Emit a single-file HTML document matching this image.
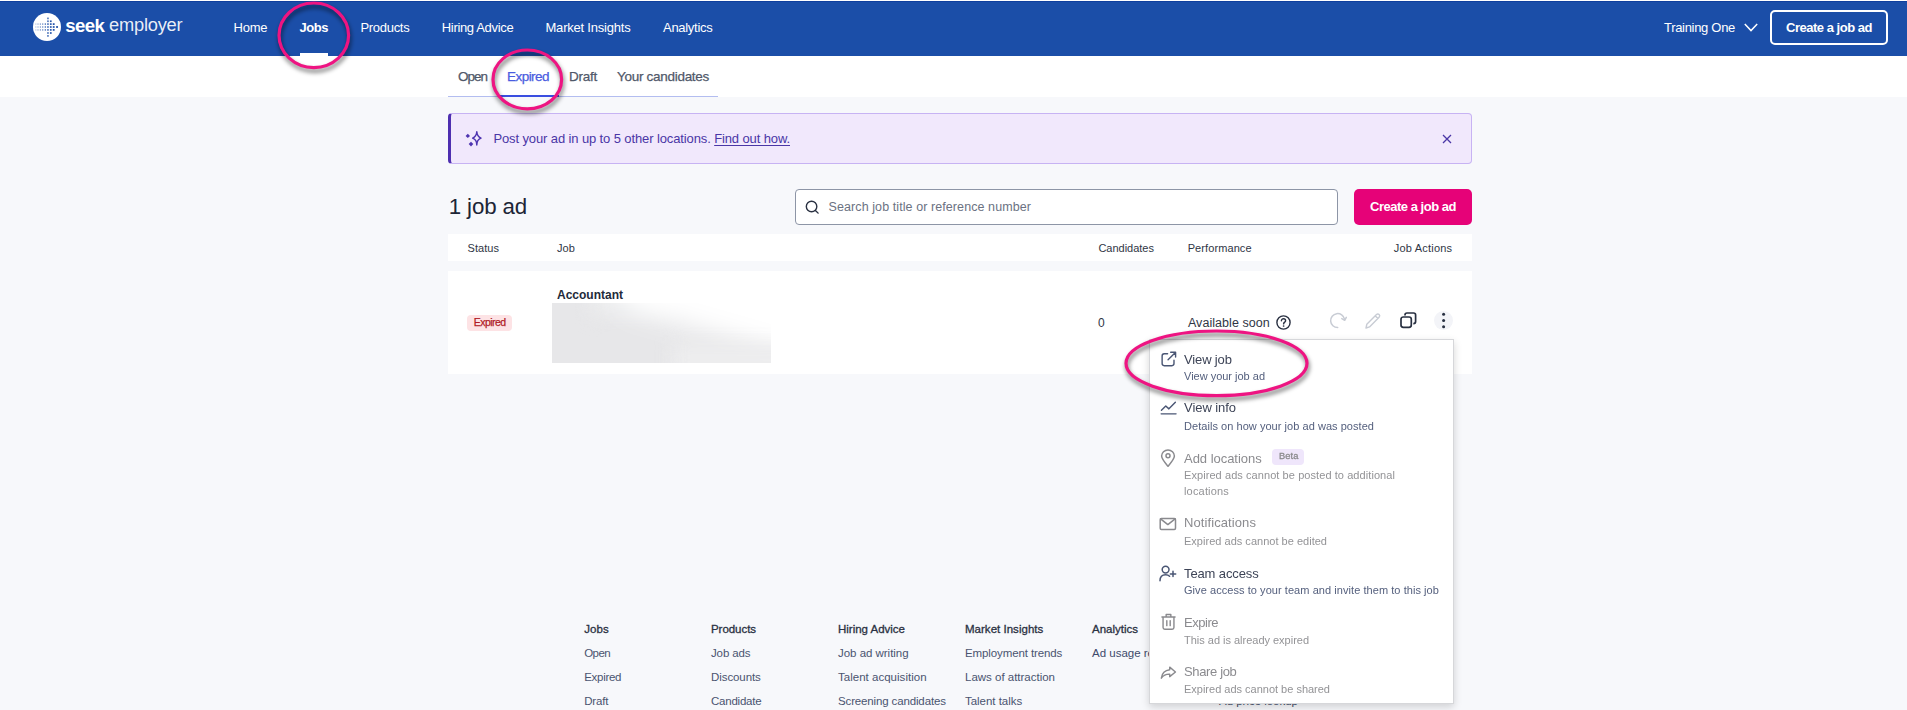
<!DOCTYPE html><html><head><meta charset="utf-8"><style>
*{margin:0;padding:0;box-sizing:border-box}
html,body{width:1907px;height:710px;overflow:hidden;background:#f7f8fb;font-family:"Liberation Sans",sans-serif;}
.a{position:absolute;white-space:nowrap}
svg.a{overflow:visible}
</style></head><body>
<div class="a" style="left:0;top:0;width:1907px;height:1px;background:#ffffff"></div><div class="a" style="left:0;top:1px;width:1907px;height:55px;background:#1b4ea8"></div><div class="a" style="left:0;top:1px;width:1907px;height:1px;background:#0f3f9e"></div><div class="a" style="left:0;top:56px;width:1907px;height:41px;background:#ffffff"></div><svg class="a" style="left:33px;top:13px" width="28" height="28" viewBox="0 0 28 28"><circle cx="14" cy="14" r="14" fill="#fff"/><rect x="2.10" y="10.25" width="1.4" height="1.7" fill="#1b4ea8" opacity="0.2"/><rect x="2.10" y="13.15" width="1.4" height="1.7" fill="#1b4ea8" opacity="0.2"/><rect x="2.10" y="16.05" width="1.4" height="1.7" fill="#1b4ea8" opacity="0.2"/><rect x="4.30" y="10.25" width="1.4" height="1.7" fill="#1b4ea8" opacity="0.3"/><rect x="4.30" y="13.15" width="1.4" height="1.7" fill="#1b4ea8" opacity="0.3"/><rect x="4.30" y="16.05" width="1.4" height="1.7" fill="#1b4ea8" opacity="0.3"/><rect x="6.80" y="10.25" width="1.2" height="1.7" fill="#1b4ea8" opacity="0.45"/><rect x="6.80" y="13.15" width="1.2" height="1.7" fill="#1b4ea8" opacity="0.45"/><rect x="6.80" y="16.05" width="1.2" height="1.7" fill="#1b4ea8" opacity="0.45"/><rect x="9.10" y="10.25" width="1.2" height="1.7" fill="#1b4ea8" opacity="0.55"/><rect x="9.10" y="13.15" width="1.2" height="1.7" fill="#1b4ea8" opacity="0.55"/><rect x="9.10" y="16.05" width="1.2" height="1.7" fill="#1b4ea8" opacity="0.55"/><rect x="11.75" y="10.25" width="1.1" height="1.7" fill="#1b4ea8" opacity="0.8"/><rect x="11.75" y="13.15" width="1.1" height="1.7" fill="#1b4ea8" opacity="0.8"/><rect x="11.75" y="16.05" width="1.1" height="1.7" fill="#1b4ea8" opacity="0.8"/><rect x="14.11" y="4.55" width="1.7" height="1.7" fill="#1b4ea8" opacity="0.75"/><rect x="14.11" y="7.40" width="1.7" height="1.7" fill="#1b4ea8" opacity="0.75"/><rect x="14.11" y="10.25" width="1.7" height="1.7" fill="#1b4ea8" opacity="0.75"/><rect x="14.11" y="13.15" width="1.7" height="1.7" fill="#1b4ea8" opacity="0.75"/><rect x="14.11" y="16.05" width="1.7" height="1.7" fill="#1b4ea8" opacity="0.75"/><rect x="14.11" y="19.15" width="1.7" height="1.7" fill="#1b4ea8" opacity="0.75"/><rect x="14.11" y="22.05" width="1.7" height="1.7" fill="#1b4ea8" opacity="0.75"/><rect x="16.95" y="7.40" width="1.7" height="1.7" fill="#1b4ea8" opacity="0.95"/><rect x="16.95" y="10.25" width="1.7" height="1.7" fill="#1b4ea8" opacity="0.95"/><rect x="16.95" y="13.15" width="1.7" height="1.7" fill="#1b4ea8" opacity="0.95"/><rect x="16.95" y="16.05" width="1.7" height="1.7" fill="#1b4ea8" opacity="0.95"/><rect x="16.95" y="19.15" width="1.7" height="1.7" fill="#1b4ea8" opacity="0.95"/><rect x="19.80" y="10.25" width="1.8" height="1.7" fill="#1b4ea8" opacity="1"/><rect x="19.80" y="13.15" width="1.8" height="1.7" fill="#1b4ea8" opacity="1"/><rect x="19.80" y="16.05" width="1.8" height="1.7" fill="#1b4ea8" opacity="1"/><rect x="23.11" y="13.15" width="1.9" height="1.7" fill="#1b4ea8" opacity="1"/></svg><div class="a t" id="t0" style="left:65.3px;top:16.96px;font-size:18.6px;line-height:18.6px;color:#fff;font-weight:700;letter-spacing:-0.594px;">seek</div>
<div class="a t" id="t1" style="left:109px;top:15.51px;font-size:18.3px;line-height:18.3px;color:rgba(255,255,255,0.92);font-weight:400;letter-spacing:-0.223px;">employer</div>
<div class="a t" id="t2" style="left:233.6px;top:21.20px;font-size:13px;line-height:13px;color:#fff;font-weight:400;letter-spacing:-0.247px;">Home</div>
<div class="a t" id="t3" style="left:299.5px;top:21.20px;font-size:13px;line-height:13px;color:#fff;font-weight:700;letter-spacing:-0.461px;">Jobs</div>
<div class="a t" id="t4" style="left:360.4px;top:21.20px;font-size:13px;line-height:13px;color:#fff;font-weight:400;letter-spacing:-0.289px;">Products</div>
<div class="a t" id="t5" style="left:441.8px;top:21.20px;font-size:13px;line-height:13px;color:#fff;font-weight:400;letter-spacing:-0.337px;">Hiring Advice</div>
<div class="a t" id="t6" style="left:545.5px;top:21.20px;font-size:13px;line-height:13px;color:#fff;font-weight:400;letter-spacing:-0.210px;">Market Insights</div>
<div class="a t" id="t7" style="left:663px;top:21.20px;font-size:13px;line-height:13px;color:#fff;font-weight:400;letter-spacing:-0.292px;">Analytics</div>
<div class="a" style="left:300px;top:53px;width:28px;height:3px;background:#fff"></div><div class="a t" id="t8" style="left:1664px;top:21.20px;font-size:13px;line-height:13px;color:#fff;font-weight:400;letter-spacing:-0.306px;">Training One</div>
<svg class="a" style="left:1744px;top:23px" width="14" height="9" viewBox="0 0 14 9"><path d="M0.8 1 L7 7.6 L13.2 1" fill="none" stroke="#fff" stroke-width="1.5"/></svg><div class="a" style="left:1770px;top:10px;width:118px;height:35px;border:2px solid #fff;border-radius:5px"></div><div class="a t" id="t9" style="left:1786px;top:21.20px;font-size:13px;line-height:13px;color:#fff;font-weight:700;letter-spacing:-0.480px;">Create a job ad</div>
<div class="a t" id="t10" style="left:458px;top:69.87px;font-size:13.5px;line-height:13.5px;color:#505869;font-weight:400;letter-spacing:-1.008px;-webkit-text-stroke:0.25px #505869;">Open</div>
<div class="a t" id="t11" style="left:507px;top:69.87px;font-size:13.5px;line-height:13.5px;color:#4a5ce0;font-weight:400;letter-spacing:-0.540px;-webkit-text-stroke:0.25px #4a5ce0;">Expired</div>
<div class="a t" id="t12" style="left:569px;top:69.87px;font-size:13.5px;line-height:13.5px;color:#505869;font-weight:400;letter-spacing:-0.253px;-webkit-text-stroke:0.25px #505869;">Draft</div>
<div class="a t" id="t13" style="left:617px;top:69.87px;font-size:13.5px;line-height:13.5px;color:#505869;font-weight:400;letter-spacing:-0.289px;-webkit-text-stroke:0.25px #505869;">Your candidates</div>
<div class="a" style="left:448px;top:96px;width:270px;height:1px;background:#b3bdf0"></div><div class="a" style="left:499px;top:95px;width:60px;height:2px;background:#3a4ee0"></div><div class="a" style="left:448px;top:113px;width:1024px;height:51px;background:#f1e8fc;border:1px solid #c7b3f3;border-left:3px solid #4e2fb0;border-radius:4px"></div><svg class="a" style="left:465px;top:130px" width="18" height="17" viewBox="0 0 18 17"><path d="M11.8 1.6 C12.1 5.4 12.8 6.8 16 8.2 C12.8 9.6 12.1 11 11.8 15 C11.5 11 10.8 9.6 7.6 8.2 C10.8 6.8 11.5 5.4 11.8 1.6 Z" fill="none" stroke="#4e34b0" stroke-width="1.4" stroke-linejoin="round"/><path d="M2.8 3.7 L5 5.9 L2.8 8.1 L0.6 5.9 Z" fill="#4e34b0"/><path d="M6 11.8 L8.3 14.1 L6 16.4 L3.7 14.1 Z" fill="#4e34b0"/></svg><div class="a t" id="t14" style="left:493.4px;top:132.00px;font-size:13px;line-height:13px;color:#4a36a6;font-weight:400;letter-spacing:-0.115px;">Post your ad in up to 5 other locations. <u style="text-underline-offset:1.5px">Find out how.</u></div>
<svg class="a" style="left:1441.8px;top:133.8px" width="10" height="10" viewBox="0 0 10 10"><path d="M1 1L9 9M9 1L1 9" stroke="#4a36a6" stroke-width="1.3"/></svg><div class="a t" id="t15" style="left:448.8px;top:195.72px;font-size:22.3px;line-height:22.3px;color:#1c2536;font-weight:400;letter-spacing:-0.145px;">1 job ad</div>
<div class="a" style="left:795px;top:189px;width:543px;height:36px;background:#fff;border:1px solid #8d95a6;border-radius:4px"></div><svg class="a" style="left:805px;top:200px" width="15" height="15" viewBox="0 0 16 16"><circle cx="7" cy="7" r="5.6" fill="none" stroke="#2a3142" stroke-width="1.5"/><path d="M11.1 11.1L14 14" stroke="#2a3142" stroke-width="1.5" stroke-linecap="round"/></svg><div class="a t" id="t16" style="left:828.6px;top:200.72px;font-size:12.5px;line-height:12.5px;color:#6b7282;font-weight:400;letter-spacing:0.083px;">Search job title or reference number</div>
<div class="a" style="left:1354px;top:189px;width:118px;height:36px;background:#e60278;border-radius:5px"></div><div class="a t" id="t17" style="left:1370px;top:200.00px;font-size:13px;line-height:13px;color:#fff;font-weight:700;letter-spacing:-0.480px;">Create a job ad</div>
<div class="a" style="left:448px;top:234px;width:1024px;height:27px;background:#fff"></div><div class="a t" id="t18" style="left:467.6px;top:242.69px;font-size:11px;line-height:11px;color:#2f3645;font-weight:400;letter-spacing:0.052px;">Status</div>
<div class="a t" id="t19" style="left:557px;top:242.69px;font-size:11px;line-height:11px;color:#2f3645;font-weight:400;letter-spacing:0.083px;">Job</div>
<div class="a t" id="t20" style="left:1098.4px;top:242.69px;font-size:11px;line-height:11px;color:#2f3645;font-weight:400;letter-spacing:-0.006px;">Candidates</div>
<div class="a t" id="t21" style="left:1187.7px;top:242.69px;font-size:11px;line-height:11px;color:#2f3645;font-weight:400;letter-spacing:0.092px;">Performance</div>
<div class="a t" id="t22" style="left:1393.8px;top:242.69px;font-size:11px;line-height:11px;color:#2f3645;font-weight:400;letter-spacing:0.203px;">Job Actions</div>
<div class="a" style="left:448px;top:271px;width:1024px;height:103px;background:#fff"></div><div class="a" style="left:467px;top:315px;width:45px;height:16px;background:#fde3e5;border-radius:4px"></div><div class="a t" id="t23" style="left:473.7px;top:317.21px;font-size:10.5px;line-height:10.5px;color:#b01a26;font-weight:400;letter-spacing:-0.516px;-webkit-text-stroke:0.25px #b01a26;">Expired</div>
<div class="a t" id="t24" style="left:557px;top:288.84px;font-size:12px;line-height:12px;color:#232a3a;font-weight:700;letter-spacing:0.000px;">Accountant</div>
<div class="a" style="left:552px;top:303px;width:219px;height:60px;background:#e7e7e9;overflow:hidden"><div style="position:absolute;left:40px;top:-20px;width:80px;height:30px;background:#eeeff0;filter:blur(10px)"></div><div style="position:absolute;left:78px;top:-62px;width:240px;height:100px;background:#ffffff;transform:rotate(16deg);filter:blur(13px)"></div><div style="position:absolute;left:120px;top:42px;width:120px;height:30px;background:#ededee;filter:blur(8px)"></div></div><div class="a t" id="t25" style="left:1098px;top:317.14px;font-size:12px;line-height:12px;color:#2f3645;font-weight:400;">0</div>
<div class="a t" id="t26" style="left:1187.9px;top:316.72px;font-size:12.5px;line-height:12.5px;color:#2f3645;font-weight:400;letter-spacing:0.065px;">Available soon</div>
<svg class="a" style="left:1276.3px;top:315px" width="15" height="15" viewBox="0 0 15 15"><circle cx="7.5" cy="7.5" r="6.6" fill="none" stroke="#2a3142" stroke-width="1.4"/><path d="M5.4 5.8 C5.4 4.5 6.4 3.8 7.5 3.8 C8.7 3.8 9.6 4.6 9.6 5.7 C9.6 7.1 7.6 7.2 7.6 8.9" fill="none" stroke="#2a3142" stroke-width="1.4" stroke-linecap="round"/><circle cx="7.6" cy="11" r="0.85" fill="#2a3142"/></svg><svg class="a" style="left:1329px;top:312px" width="18" height="17" viewBox="0 0 18 17"><path d="M15.5 7.2 A7 7 0 1 0 8.7 15.6" fill="none" stroke="#c8ccd4" stroke-width="1.5" stroke-linecap="round"/><path d="M12.8 6.6 L15.7 8.3 L17.3 5.3" fill="none" stroke="#c8ccd4" stroke-width="1.5" stroke-linecap="round" stroke-linejoin="round"/></svg><svg class="a" style="left:1365px;top:313px" width="16" height="16" viewBox="0 0 16 16"><path d="M1 15 L1.8 11.3 L11.5 1.6 C12.2 0.9 13.4 0.9 14.1 1.6 C14.8 2.3 14.8 3.5 14.1 4.2 L4.5 13.9 Z M10.4 2.9 L12.9 5.4" fill="none" stroke="#c8ccd4" stroke-width="1.4" stroke-linejoin="round"/></svg><svg class="a" style="left:1400px;top:312px" width="17" height="17" viewBox="0 0 17 17"><rect x="1" y="5" width="10.3" height="10.3" rx="2.3" fill="none" stroke="#283041" stroke-width="1.7"/><path d="M5 3.4 V3 C5 1.9 5.9 1 7 1 H13.6 C14.7 1 15.6 1.9 15.6 3 V9.6 C15.6 10.7 14.7 11.6 13.6 11.6 H13.3" fill="none" stroke="#283041" stroke-width="1.7"/></svg><div class="a" style="left:1434px;top:311px;width:19px;height:19px;border-radius:50%;background:#f3f4f8"></div><svg class="a" style="left:1440px;top:311px" width="8" height="19" viewBox="0 0 8 19"><circle cx="3.6" cy="3.2" r="1.5" fill="#283041"/><circle cx="3.6" cy="9.6" r="1.5" fill="#283041"/><circle cx="3.6" cy="15.8" r="1.5" fill="#283041"/></svg><div class="a t" id="t27" style="left:584.2px;top:623.67px;font-size:11.5px;line-height:11.5px;color:#2a3142;font-weight:400;letter-spacing:0.051px;-webkit-text-stroke:0.3px #2a3142;">Jobs</div>
<div class="a t" id="t28" style="left:584.2px;top:647.87px;font-size:11.5px;line-height:11.5px;color:#4a5470;font-weight:400;letter-spacing:-0.535px;">Open</div>
<div class="a t" id="t29" style="left:584.2px;top:671.87px;font-size:11.5px;line-height:11.5px;color:#4a5470;font-weight:400;letter-spacing:-0.286px;">Expired</div>
<div class="a t" id="t30" style="left:584.2px;top:695.87px;font-size:11.5px;line-height:11.5px;color:#4a5470;font-weight:400;letter-spacing:-0.184px;">Draft</div>
<div class="a t" id="t31" style="left:711px;top:623.67px;font-size:11.5px;line-height:11.5px;color:#2a3142;font-weight:400;letter-spacing:-0.049px;-webkit-text-stroke:0.3px #2a3142;">Products</div>
<div class="a t" id="t32" style="left:711px;top:647.87px;font-size:11.5px;line-height:11.5px;color:#4a5470;font-weight:400;letter-spacing:-0.126px;">Job ads</div>
<div class="a t" id="t33" style="left:711px;top:671.87px;font-size:11.5px;line-height:11.5px;color:#4a5470;font-weight:400;letter-spacing:-0.078px;">Discounts</div>
<div class="a t" id="t34" style="left:711px;top:695.87px;font-size:11.5px;line-height:11.5px;color:#4a5470;font-weight:400;letter-spacing:-0.226px;">Candidate</div>
<div class="a t" id="t35" style="left:838px;top:623.67px;font-size:11.5px;line-height:11.5px;color:#2a3142;font-weight:400;letter-spacing:-0.010px;-webkit-text-stroke:0.3px #2a3142;">Hiring Advice</div>
<div class="a t" id="t36" style="left:838px;top:647.87px;font-size:11.5px;line-height:11.5px;color:#4a5470;font-weight:400;letter-spacing:-0.026px;">Job ad writing</div>
<div class="a t" id="t37" style="left:838px;top:671.87px;font-size:11.5px;line-height:11.5px;color:#4a5470;font-weight:400;letter-spacing:0.020px;">Talent acquisition</div>
<div class="a t" id="t38" style="left:838px;top:695.87px;font-size:11.5px;line-height:11.5px;color:#4a5470;font-weight:400;letter-spacing:-0.140px;">Screening candidates</div>
<div class="a t" id="t39" style="left:965px;top:623.67px;font-size:11.5px;line-height:11.5px;color:#2a3142;font-weight:400;letter-spacing:0.021px;-webkit-text-stroke:0.3px #2a3142;">Market Insights</div>
<div class="a t" id="t40" style="left:965px;top:647.87px;font-size:11.5px;line-height:11.5px;color:#4a5470;font-weight:400;letter-spacing:-0.110px;">Employment trends</div>
<div class="a t" id="t41" style="left:965px;top:671.87px;font-size:11.5px;line-height:11.5px;color:#4a5470;font-weight:400;letter-spacing:-0.008px;">Laws of attraction</div>
<div class="a t" id="t42" style="left:965px;top:695.87px;font-size:11.5px;line-height:11.5px;color:#4a5470;font-weight:400;letter-spacing:-0.028px;">Talent talks</div>
<div class="a t" id="t43" style="left:1092px;top:623.67px;font-size:11.5px;line-height:11.5px;color:#2a3142;font-weight:400;letter-spacing:-0.003px;-webkit-text-stroke:0.3px #2a3142;">Analytics</div>
<div class="a t" id="t44" style="left:1092px;top:647.87px;font-size:11.5px;line-height:11.5px;color:#3e4a6b;font-weight:400;">Ad usage report</div>
<div class="a t" id="t45" style="left:1219px;top:695.67px;font-size:11.5px;line-height:11.5px;color:#3e4a66;font-weight:400;letter-spacing:-0.019px;">Ad price lookup</div>
<div class="a" style="left:1149px;top:339px;width:305px;height:365px;background:#fff;border:1px solid #d6d7da;box-shadow:0 3px 8px rgba(0,0,0,0.16)"></div><div class="a t" id="t46" style="left:1184.4px;top:352.75px;font-size:13px;line-height:13px;color:#3d4457;font-weight:400;letter-spacing:-0.138px;will-change:transform;">View job</div>
<div class="a t" id="t47" style="left:1184.4px;top:370.79px;font-size:11px;line-height:11px;color:#55607e;font-weight:400;letter-spacing:-0.008px;will-change:transform;">View your job ad</div>
<div class="a t" id="t48" style="left:1184.4px;top:401.45px;font-size:13px;line-height:13px;color:#3d4457;font-weight:400;letter-spacing:-0.057px;will-change:transform;">View info</div>
<div class="a t" id="t49" style="left:1184.4px;top:421.49px;font-size:11px;line-height:11px;color:#55607e;font-weight:400;letter-spacing:0.045px;will-change:transform;">Details on how your job ad was posted</div>
<div class="a t" id="t50" style="left:1184.4px;top:451.65px;font-size:13px;line-height:13px;color:#8b8b8f;font-weight:400;letter-spacing:-0.028px;will-change:transform;">Add locations</div>
<div class="a t" id="t51" style="left:1184.4px;top:470.39px;font-size:11px;line-height:11px;color:#939396;font-weight:400;letter-spacing:0.073px;will-change:transform;">Expired ads cannot be posted to additional</div>
<div class="a t" id="t52" style="left:1184.4px;top:486.19px;font-size:11px;line-height:11px;color:#939396;font-weight:400;letter-spacing:0.175px;will-change:transform;">locations</div>
<div class="a t" id="t53" style="left:1184.4px;top:516.35px;font-size:13px;line-height:13px;color:#8b8b8f;font-weight:400;letter-spacing:0.091px;will-change:transform;">Notifications</div>
<div class="a t" id="t54" style="left:1184.4px;top:536.39px;font-size:11px;line-height:11px;color:#939396;font-weight:400;letter-spacing:0.018px;will-change:transform;">Expired ads cannot be edited</div>
<div class="a t" id="t55" style="left:1184.4px;top:566.65px;font-size:13px;line-height:13px;color:#3d4457;font-weight:400;letter-spacing:-0.116px;will-change:transform;">Team access</div>
<div class="a t" id="t56" style="left:1184.4px;top:585.39px;font-size:11px;line-height:11px;color:#55607e;font-weight:400;letter-spacing:0.059px;will-change:transform;">Give access to your team and invite them to this job</div>
<div class="a t" id="t57" style="left:1184.4px;top:615.75px;font-size:13px;line-height:13px;color:#8b8b8f;font-weight:400;letter-spacing:-0.477px;will-change:transform;">Expire</div>
<div class="a t" id="t58" style="left:1184.4px;top:634.89px;font-size:11px;line-height:11px;color:#939396;font-weight:400;letter-spacing:-0.013px;will-change:transform;">This ad is already expired</div>
<div class="a t" id="t59" style="left:1184.4px;top:665.35px;font-size:13px;line-height:13px;color:#8b8b8f;font-weight:400;letter-spacing:-0.351px;will-change:transform;">Share job</div>
<div class="a t" id="t60" style="left:1184.4px;top:683.99px;font-size:11px;line-height:11px;color:#939396;font-weight:400;letter-spacing:-0.006px;will-change:transform;">Expired ads cannot be shared</div>
<div class="a" style="left:1272px;top:449px;width:32px;height:16px;background:#efe6fb;border-radius:4px"></div><div class="a t" id="t61" style="left:1278.7px;top:452.33px;font-size:9.3px;line-height:9.3px;color:#8a8a8c;font-weight:400;letter-spacing:0.069px;-webkit-text-stroke:0.3px #8a8a8c;will-change:transform;">Beta</div>
<svg class="a" style="left:1160.8px;top:350.8px" width="16" height="16" viewBox="0 0 17 17"><path d="M7 3 H3.4 C2.1 3 1.2 3.9 1.2 5.2 V13.4 C1.2 14.7 2.1 15.6 3.4 15.6 H11.6 C12.9 15.6 13.8 14.7 13.8 13.4 V9.8" stroke="#4a5674" stroke-width="1.5" fill="none" stroke-linecap="round" stroke-linejoin="round"/><path d="M7.5 9.3 L15.3 1.5 M10.3 1.3 H15.5 V6.5" stroke="#4a5674" stroke-width="1.5" fill="none" stroke-linecap="round" stroke-linejoin="round"/></svg><svg class="a" style="left:1159.5px;top:401.3px" width="17.3" height="14.4" viewBox="0 0 18 15"><path d="M1.5 9.6 L6 5.2 L9.3 8.2 L16 1.3" stroke="#4a5674" stroke-width="1.5" fill="none" stroke-linecap="round" stroke-linejoin="round"/><path d="M1.2 13.4 H16.7" stroke="#4a5674" stroke-width="1.5" fill="none" stroke-linecap="round" stroke-linejoin="round"/></svg><svg class="a" style="left:1160px;top:449px" width="16" height="19" viewBox="0 0 16 19"><path d="M8 17.3 C4.6 13.4 1.6 10 1.6 7.1 C1.6 3.6 4.5 1 8 1 C11.5 1 14.4 3.6 14.4 7.1 C14.4 10 11.4 13.4 8 17.3 Z" stroke="#8a8a8e" stroke-width="1.5" fill="none" stroke-linecap="round" stroke-linejoin="round"/><circle cx="8" cy="6.8" r="2" stroke="#8a8a8e" stroke-width="1.5" fill="none" stroke-linecap="round" stroke-linejoin="round"/></svg><svg class="a" style="left:1159px;top:517px" width="18" height="14" viewBox="0 0 18 14"><rect x="1.2" y="1.6" width="15.3" height="10.8" rx="1.2" stroke="#8a8a8e" stroke-width="1.5" fill="none" stroke-linecap="round" stroke-linejoin="round"/><path d="M1.6 1.8 L8.85 7.6 L16.1 1.8" stroke="#8a8a8e" stroke-width="1.5" fill="none" stroke-linecap="round" stroke-linejoin="round"/></svg><svg class="a" style="left:1159px;top:565px" width="18" height="17" viewBox="0 0 18 17"><circle cx="6.6" cy="4.6" r="3.4" stroke="#4a5674" stroke-width="1.5" fill="none" stroke-linecap="round" stroke-linejoin="round"/><path d="M1 15.8 C1 11.8 3.4 9.8 6.6 9.8 C8.2 9.8 9.6 10.2 10.6 11.2" stroke="#4a5674" stroke-width="1.5" fill="none" stroke-linecap="round" stroke-linejoin="round"/><path d="M14 6.2 V11.6 M11.3 8.9 H16.7" stroke="#4a5674" stroke-width="1.5" fill="none" stroke-linecap="round" stroke-linejoin="round"/></svg><svg class="a" style="left:1160.5px;top:613.3px" width="15" height="18" viewBox="0 0 16 19"><path d="M2.2 4.2 V15.4 C2.2 16.6 3 17.3 4.1 17.3 H11.9 C13 17.3 13.8 16.6 13.8 15.4 V4.2 Z M1 4.2 H15 M5.5 4.2 V1.5 H10.5 V4.2 M6.2 8 V13.4 M9.8 8 V13.4" stroke="#8a8a8e" stroke-width="1.5" fill="none" stroke-linecap="round" stroke-linejoin="round"/></svg><svg class="a" style="left:1159.6px;top:666.4px" width="17" height="13.2" viewBox="0 0 18 14"><path d="M10.3 1.2 L16.4 6.3 L10.3 11.3 V8.6 C6.2 8.4 3.6 9.8 1.4 12.9 C2 8.3 4.6 4.6 10.3 4 Z" stroke="#8a8a8e" stroke-width="1.5" fill="none" stroke-linecap="round" stroke-linejoin="round"/></svg><svg class="a" style="left:268.7px;top:-7.299999999999997px" width="89.6" height="84.6" viewBox="0 0 89.6 84.6"><defs><filter id="f313" x="-30%" y="-30%" width="160%" height="160%"><feGaussianBlur stdDeviation="2.2"/></filter></defs><ellipse cx="45.8" cy="45.8" rx="34.8" ry="32.3" fill="none" stroke="rgba(0,0,0,0.45)" stroke-width="4" filter="url(#f313)"/><ellipse cx="44.8" cy="42.3" rx="34.8" ry="32.3" fill="none" stroke="#ee1482" stroke-width="3.2"/></svg><svg class="a" style="left:482.7px;top:39.9px" width="88.6" height="78.8" viewBox="0 0 88.6 78.8"><defs><filter id="f527" x="-30%" y="-30%" width="160%" height="160%"><feGaussianBlur stdDeviation="2.2"/></filter></defs><ellipse cx="45.3" cy="42.9" rx="34.3" ry="29.4" fill="none" stroke="rgba(0,0,0,0.45)" stroke-width="4" filter="url(#f527)"/><ellipse cx="44.3" cy="39.4" rx="34.3" ry="29.4" fill="none" stroke="#ee1482" stroke-width="3.2"/></svg><svg class="a" style="left:1116.0px;top:320.8px" width="201.0" height="84.6" viewBox="0 0 201.0 84.6"><defs><filter id="f1216" x="-30%" y="-30%" width="160%" height="160%"><feGaussianBlur stdDeviation="2.2"/></filter></defs><ellipse cx="101.5" cy="45.8" rx="90.5" ry="32.3" fill="none" stroke="rgba(0,0,0,0.45)" stroke-width="4" filter="url(#f1216)"/><ellipse cx="100.5" cy="42.3" rx="90.5" ry="32.3" fill="none" stroke="#ee1482" stroke-width="3.2"/></svg></body></html>
